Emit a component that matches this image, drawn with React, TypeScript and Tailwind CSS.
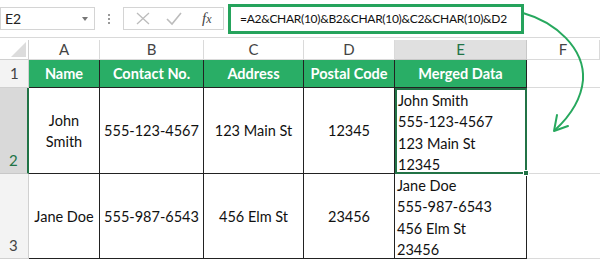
import React from "react";

const GREEN = "#29ae66";

const cols = ["A", "B", "C", "D", "E", "F"];
const headers = ["Name", "Contact No.", "Address", "Postal Code", "Merged Data"];

const rows = [
  {
    n: "2",
    h: "h-[86px]",
    cells: [["John", "Smith"], ["555-123-4567"], ["123 Main St"], ["12345"]],
    merged: ["John Smith", "555-123-4567", "123 Main St", "12345"],
  },
  {
    n: "3",
    h: "h-[85px]",
    cells: [["Jane Doe"], ["555-987-6543"], ["456 Elm St"], ["23456"]],
    merged: ["Jane Doe", "555-987-6543", "456 Elm St", "23456"],
  },
];

const FormulaBar = () => (
  <div className="flex h-[38px] items-center border-b border-[#d9d9d9] bg-white">
    <div className="relative flex h-[23px] w-[95px] items-center border border-[#d4d4d4] pl-[4px] text-[14px] text-[#222]">
      E2
      <span className="absolute right-[6px] top-[9px] h-0 w-0 border-x-[3px] border-t-[4px] border-x-transparent border-t-[#777]" />
    </div>
    <div className="flex w-[28px] flex-col items-center gap-[2px]">
      <span className="h-[2px] w-[2px] bg-[#999]" />
      <span className="h-[2px] w-[2px] bg-[#999]" />
      <span className="h-[2px] w-[2px] bg-[#999]" />
    </div>
    <div className="flex h-[23px] w-[101px] items-center border border-[#d4d4d4]">
      <svg width="100" height="21" viewBox="0 0 100 21">
        <path d="M13 5 L25 16 M25 5 L13 16" stroke="#bcbcbc" strokeWidth="1.3" fill="none" />
        <path d="M43 11 L48 16 L57 5" stroke="#bcbcbc" strokeWidth="1.6" fill="none" />
      </svg>
      <span className="-ml-[22px] font-['Liberation_Serif',serif] text-[15px] italic text-[#444]">
        f<span className="text-[12px]">x</span>
      </span>
    </div>
    <div className="ml-[4px] flex h-[30px] w-[296px] items-center overflow-hidden whitespace-nowrap border-[3px] border-[#25a35c] pl-[9px] text-[12px] tracking-[-0.3px] text-[#111]">
      =A2&amp;CHAR(10)&amp;B2&amp;CHAR(10)&amp;C2&amp;CHAR(10)&amp;D2
    </div>
  </div>
);

export default function App() {
  return (
    <div className="relative h-[262px] w-[600px] overflow-hidden bg-white font-['Lato',sans-serif]">
      <FormulaBar />
      <div className="h-[2px]" />
      <div className="grid grid-cols-[29px_71px_104px_100px_91px_132px_73px]">
        {/* column header row */}
        <div className="flex h-[20px] items-end justify-end border-r border-b border-[#d0d0d0] bg-white pb-[2px] pr-[2px]">
          <svg width="15" height="15" viewBox="0 0 15 15">
            <path d="M15 0 L15 15 L0 15 Z" fill="#dcdcdc" />
          </svg>
        </div>
        {cols.map((c) => (
          <div
            key={c}
            className={
              c === "E"
                ? "flex h-[20px] items-center justify-center border-r border-b border-[#c8c8c8] bg-[#e0e0e0] text-[15px] text-[#217346]"
                : "flex h-[20px] items-center justify-center border-r border-b border-[#dadada] bg-white text-[15px] text-[#444]"
            }
          >
            {c}
          </div>
        ))}

        {/* row 1 */}
        <div className="flex h-[28px] items-center pl-[10px] border-r border-b border-[#d0d0d0] bg-[#f3f3f3] text-[15px] text-[#444]">
          1
        </div>
        {headers.map((h) => (
          <div
            key={h}
            className="flex h-[28px] items-center justify-center border-r border-b border-[#222] text-[14.5px] font-bold text-white"
            style={{ background: GREEN }}
          >
            {h}
          </div>
        ))}
        <div className="h-[28px] border-b border-[#dadada]" />

        {rows.map((r) => (
          <React.Fragment key={r.n}>
            <div
              className={
                r.n === "2"
                  ? `flex ${r.h} items-end pb-[2px] pl-[9px] border-r-2 border-r-[#217346] border-b border-b-[#c8c8c8] bg-[#d9d9d9] text-[15px] text-[#217346]`
                  : `flex ${r.h} items-end pb-[2px] pl-[9px] border-r border-b border-[#d0d0d0] bg-[#f3f3f3] text-[15px] text-[#444]`
              }
            >
              {r.n}
            </div>
            {r.cells.map((lines, i) => (
              <div
                key={i}
                className={`flex ${r.h} flex-col items-center justify-center border-r border-b border-[#222] text-[14.5px] leading-[21px] text-[#111]`}
              >
                {lines.map((l) => (
                  <span key={l}>{l}</span>
                ))}
              </div>
            ))}
            <div
              className={
                r.n === "2"
                  ? `relative flex ${r.h} flex-col border-2 border-[#217346] pl-[1px] text-[14.5px] leading-[21.3px] text-[#111]`
                  : `flex ${r.h} flex-col overflow-hidden border-r border-b border-[#222] pl-[2px] pt-[1px] text-[14.5px] leading-[21.3px] text-[#111]`
              }
            >
              {r.merged.map((l) => (
                <span key={l}>{l}</span>
              ))}
              {r.n === "2" && (
                <span className="absolute -bottom-[4px] -right-[4px] h-[6px] w-[6px] border border-white bg-[#217346]" />
              )}
            </div>
            <div className={`${r.h} border-b border-[#dadada]`} />
          </React.Fragment>
        ))}
      </div>

      <svg className="pointer-events-none absolute left-0 top-0" width="600" height="262" viewBox="0 0 600 262">
        <path
          d="M523 13 C555 22 585 48 583 80 C581 102 568 118 555 130"
          stroke="#27a85e"
          strokeWidth="2"
          fill="none"
        />
        <path d="M557 115 L554 131 L568 126" stroke="#27a85e" strokeWidth="2" fill="none" strokeLinecap="round" strokeLinejoin="round" />
      </svg>
    </div>
  );
}
